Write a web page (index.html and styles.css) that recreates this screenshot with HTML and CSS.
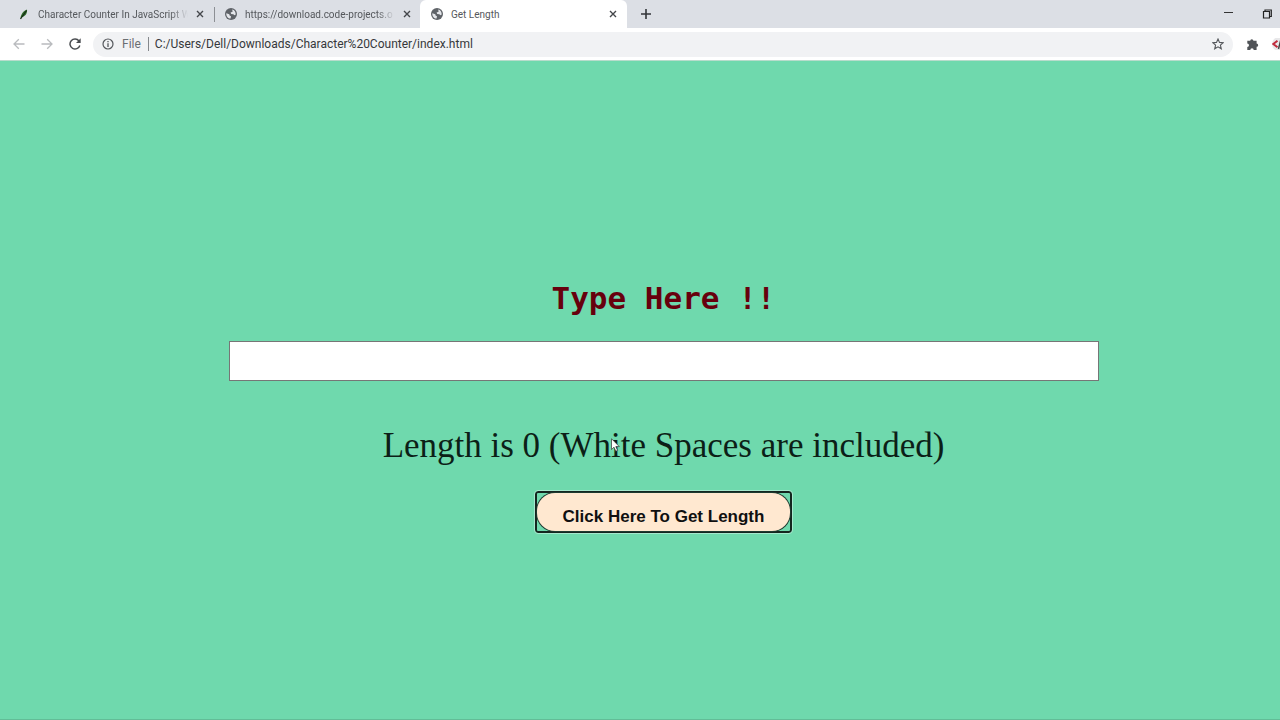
FILE: index.html
```html
<!DOCTYPE html>
<html lang="en">
<head>
  <meta charset="UTF-8">
  <meta name="viewport" content="width=device-width, initial-scale=1.0">
  <title>Get Length</title>
  <link rel="stylesheet" href="styles.css">
</head>
<body>
  <svg class="defs" width="0" height="0" aria-hidden="true">
    <symbol id="globe" viewBox="0 0 12 12">
      <circle cx="6" cy="6" r="6" fill="#5f6368"/>
      <path d="M1.3 5.2 L4.3 6.3 L4.6 7.6 L6 8.2 L5.6 10.6 C3 10.6 1 8.2 1.3 5.2Z" fill="#e4e6ea"/>
      <path d="M7.2 1.4 C9.4 1.8 10.8 3.8 10.7 6.4 L9.6 7.2 L8.3 6.3 L6.2 6 L5.6 4.6 L7.6 3.8Z" fill="#e4e6ea"/>
    </symbol>
    <symbol id="close" viewBox="0 0 8 8">
      <path d="M1 1 L7 7 M7 1 L1 7" stroke="#44474b" stroke-width="1.4"/>
    </symbol>
  </svg>

  <header class="browser">
    <div class="tabs">
      <div class="tab first">
        <svg class="icon" viewBox="0 0 12 12"><path d="M2.5 11 C2.5 7 5 3 9 1.5 C9.5 5 7.5 8.5 4 9Z" fill="#2f6b2b"/><path d="M2.5 11 L8.5 2.5" stroke="#152a13" stroke-width="1.2"/></svg>
        <span class="tab-title fade">Character Counter In JavaScript W</span>
        <button class="close" aria-label="Close tab"><svg viewBox="0 0 8 8"><use href="#close"/></svg></button>
      </div>
      <div class="tab second">
        <svg class="icon" viewBox="0 0 12 12"><use href="#globe"/></svg>
        <span class="tab-title fade">https://download.code-projects.o</span>
        <button class="close" aria-label="Close tab"><svg viewBox="0 0 8 8"><use href="#close"/></svg></button>
      </div>
      <div class="tab active">
        <svg class="icon" viewBox="0 0 12 12"><use href="#globe"/></svg>
        <span class="tab-title">Get Length</span>
        <button class="close" aria-label="Close tab"><svg viewBox="0 0 8 8"><use href="#close"/></svg></button>
      </div>
      <button class="new-tab" aria-label="New tab"><svg viewBox="0 0 10 10"><path d="M5 0V10M0 5H10" stroke="#33363a" stroke-width="1.6"/></svg></button>
      <div class="window-buttons">
        <button aria-label="Minimize"><svg viewBox="0 0 10 10"><path d="M1 3.5H10" stroke="#333" stroke-width="1"/></svg></button>
        <button aria-label="Restore"><svg viewBox="0 0 10 10"><path d="M1.5 2.5H7.5V9H1.5ZM3 2.5V1H9.3V7.5H7.5" fill="none" stroke="#222" stroke-width="1.2"/></svg></button>
      </div>
    </div>

    <div class="toolbar">
      <button aria-label="Back"><svg viewBox="0 0 12 12"><path d="M11.5 6H1M5.8 1.2L1 6L5.8 10.8" fill="none" stroke="#b9bbbe" stroke-width="1.3"/></svg></button>
      <button aria-label="Forward"><svg viewBox="0 0 12 12"><path d="M0.5 6H11M6.2 1.2L11 6L6.2 10.8" fill="none" stroke="#b9bbbe" stroke-width="1.3"/></svg></button>
      <button aria-label="Reload"><svg viewBox="0 0 12 12"><path d="M10 3A5 5 0 1 0 10.8 7.5" fill="none" stroke="#4a4d51" stroke-width="1.5"/><path d="M11.7 0.3V5H7Z" fill="#4a4d51"/></svg></button>
      <div class="address">
        <svg class="icon" viewBox="0 0 12 12"><circle cx="6" cy="6" r="5" fill="none" stroke="#55585c" stroke-width="1.2"/><path d="M6 5.3V9M6 3V4.3" stroke="#55585c" stroke-width="1.3"/></svg>
        <span class="scheme">File</span>
        <span class="url">C:/Users/Dell/Downloads/Character%20Counter/index.html</span>
        <button aria-label="Bookmark"><svg viewBox="0 0 12 12"><path d="M6 1L7.5 4.4L11.2 4.7L8.4 7.1L9.3 10.8L6 8.8L2.7 10.8L3.6 7.1L0.8 4.7L4.5 4.4Z" fill="none" stroke="#55585c" stroke-width="1.1"/></svg></button>
      </div>
      <div class="extensions">
        <button aria-label="Extensions"><svg viewBox="0 0 12 12"><path d="M0.3 2.8H3.2A1.6 1.6 0 1 1 6.4 2.8H9.6V5.6A1.6 1.6 0 1 1 9.6 8.8V12H6.7A1.7 1.7 0 0 0 3.3 12H0.3V8.9A1.7 1.7 0 0 0 0.3 5.5Z" fill="#505357"/></svg></button>
        <button aria-label="Code extension"><svg viewBox="0 0 12 12"><circle cx="7" cy="6" r="7" fill="#e8e8ea"/><path d="M5.5 2.8L1.3 6L5.5 9.2" fill="none" stroke="#c02b3d" stroke-width="2"/><path d="M6.5 11L9 1" stroke="#444" stroke-width="1.5"/></svg></button>
      </div>
    </div>
  </header>

  <main class="container">
    <label for="text">Type Here !!</label>
    <input type="text" id="text" autocomplete="off">
    <p id="length">Length is 0 (White Spaces are included)</p>
    <button class="btn" onclick="getLength()"><span>Click Here To Get Length</span></button>
    <svg class="cursor" viewBox="0 0 9 14" aria-hidden="true"><path d="M0.5 0.7V11.5L3 9.2L4.8 13.2L6.6 12.4L4.8 8.6H8.3Z" fill="#fff" stroke="#333" stroke-width="0.7"/></svg>
  </main>

  <script>
    function getLength() {
      const text = document.getElementById("text").value;
      document.getElementById("length").innerText = "Length is " + text.length + " (White Spaces are included)";
    }
  </script>
</body>
</html>
```
FILE: styles.css
```css
* {
  box-sizing: border-box;
}
body {
  margin: 0;
  min-height: 100vh;
  display: flex;
  flex-direction: column;
  background-color: #6fd9ad;
  overflow-x: hidden;
}
button {
  border: none;
  padding: 0;
  background: none;
  cursor: pointer;
}
svg {
  display: block;
}
.defs {
  position: absolute;
}
.browser {
  font-family: Roboto, 'Noto Sans', sans-serif;
  border-bottom: 1px solid #b9dccc;
}
.tabs {
  display: flex;
  align-items: center;
  height: 28px;
  background-color: #dcdfe5;
}
.tab {
  display: flex;
  align-items: center;
  gap: 8px;
  height: 100%;
  font-size: 10px;
  color: #55585c;
}
.first {
  width: 210px;
  padding: 0 6px 0 18px;
}
.second {
  width: 210px;
  padding: 0 9px 0 15px;
  position: relative;
}
.second::before {
  content: "";
  position: absolute;
  left: 4px;
  top: 7px;
  width: 1px;
  height: 15px;
  background-color: #8c8f94;
}
.active {
  width: 207px;
  padding: 0 10px 0 11px;
  background-color: white;
  border-radius: 6px 6px 0 0;
}
.icon {
  width: 12px;
  height: 12px;
  flex: none;
}
.tab-title {
  flex: 1;
  overflow: hidden;
  white-space: nowrap;
}
.fade {
  mask-image: linear-gradient(to right, black 88%, transparent);
}
.close {
  flex: none;
}
.close svg {
  width: 8px;
  height: 8px;
}
.new-tab {
  margin-left: 14px;
}
.new-tab svg {
  width: 10px;
  height: 10px;
}
.window-buttons {
  display: flex;
  gap: 29px;
  margin-left: auto;
  padding-right: 8px;
}
.window-buttons svg {
  width: 10px;
  height: 10px;
}
.toolbar {
  display: flex;
  align-items: center;
  gap: 16px;
  height: 32px;
  padding-left: 13px;
  background-color: white;
}
.toolbar button svg {
  width: 12px;
  height: 12px;
}
.address {
  flex: 1;
  display: flex;
  align-items: center;
  height: 25px;
  margin-left: -4px;
  padding: 0 9px;
  border-radius: 13px;
  background-color: #f1f2f4;
  font-size: 12px;
  color: #36383b;
}
.scheme {
  margin-left: 8px;
  padding-right: 7px;
  border-right: 1px solid #85888c;
  line-height: 14px;
  color: #6b6e72;
}
.url {
  flex: 1;
  padding-left: 6px;
}
.extensions {
  display: flex;
  gap: 13px;
  margin-left: -2px;
  margin-right: -4px;
}
.container {
  flex: 1;
  position: relative;
  display: flex;
  flex-direction: column;
  align-items: center;
  padding: 217px 0 40px 47px;
  border-bottom: 1px solid #62bd97;
}
label {
  font: bold 31px/40px 'DejaVu Sans Mono', monospace;
  color: #67000d;
}
#text {
  width: 870px;
  max-width: 92%;
  height: 40px;
  margin-top: 23px;
  padding: 0 8px;
  border: 1px solid #767676;
  background-color: white;
  font-size: 24px;
}
#length {
  margin: 45px 0 25px;
  font: 35px/40px 'Liberation Serif', serif;
  color: #0c1f17;
}
.btn {
  border: 2px solid #14261f;
  border-radius: 3px;
  outline: 1px solid #a5e8cd;
}
.btn span {
  display: block;
  padding: 8px 26px 0;
  height: 38px;
  border-radius: 18px;
  background-color: #ffe8d0;
  box-shadow: 0 0 0 1px #1f3a30;
  font: bold 17px/32px 'Liberation Sans', sans-serif;
  color: #101010;
}
.cursor {
  position: absolute;
  left: 611px;
  top: 377px;
  width: 9px;
  height: 14px;
}
```
